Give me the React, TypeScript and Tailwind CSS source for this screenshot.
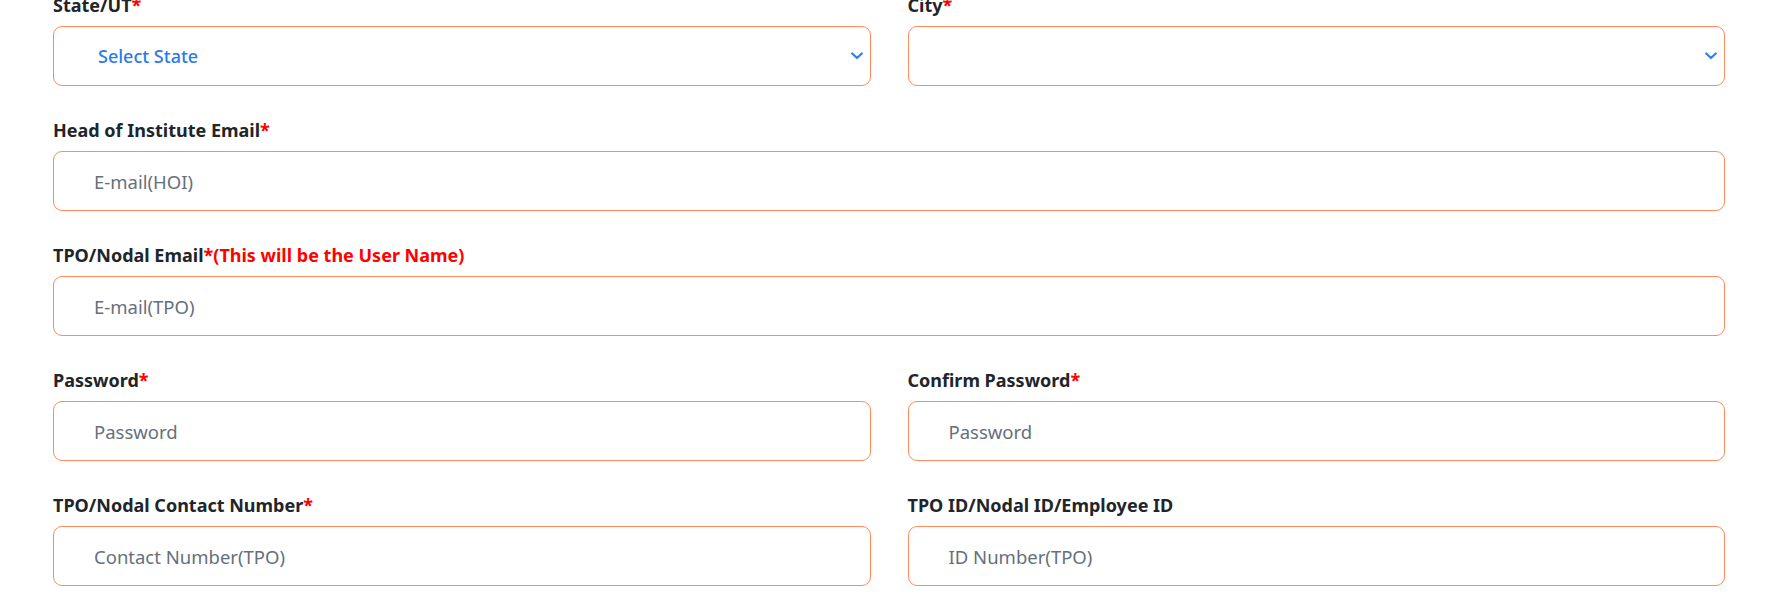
type FieldProps = {
  label: string;
  required?: boolean;
  note?: string;
  placeholder?: string;
  type?: string;
};

const boxClass =
  "h-[60px] w-full rounded-[9px] border border-[#ff8a5b] bg-white pl-[40px] pr-3 text-[18.5px] text-[#212529] placeholder:text-[#66707a] focus:outline-none";

function Label({ label, required, note }: { label: string; required?: boolean; note?: string }) {
  return (
    <label className="mb-[9px] block h-[24px] text-[18px] font-bold leading-[24px] text-[#212529]">
      {label}
      {required && <span className="text-[#ff0000]">*</span>}
      {note && <span className="text-[#ff0000]">{note}</span>}
    </label>
  );
}

function TextField({ label, required, note, placeholder, type = "text" }: FieldProps) {
  return (
    <div className="flex flex-col">
      <Label label={label} required={required} note={note} />
      <input type={type} placeholder={placeholder} className={boxClass} />
    </div>
  );
}

function Chevron() {
  return (
    <svg
      width="12"
      height="8"
      viewBox="0 0 12 8"
      className="pointer-events-none absolute right-[8px] top-1/2 -translate-y-1/2"
      fill="none"
    >
      <polyline points="1.2,1.5 6,6 10.8,1.5" stroke="#2f7ff0" strokeWidth="2.2" strokeLinecap="round" strokeLinejoin="round" />
    </svg>
  );
}

function SelectField({ label, placeholder }: { label: string; placeholder?: string }) {
  return (
    <div className="flex flex-col">
      <Label label={label} required />
      <div className="relative">
        <select
          className="h-[60px] w-full appearance-none rounded-[9px] border border-[#ff8a5b] bg-white pl-[44px] pr-8 text-[18px] font-medium text-[#2a7bea] focus:outline-none"
          defaultValue=""
        >
          <option value="">{placeholder ?? ""}</option>
        </select>
        <Chevron />
      </div>
    </div>
  );
}

export default function App() {
  return (
    <div
      className="min-h-screen overflow-hidden bg-white"
      style={{ fontFamily: '"Noto Sans", "Open Sans", sans-serif' }}
    >
      <div className="-mt-[7px] grid grid-cols-2 gap-x-[37px] gap-y-[32px] pl-[53px] pr-[56px]">
        <SelectField label="State/UT" placeholder="Select State" />
        <SelectField label="City" />
        <div className="col-span-2">
          <TextField label="Head of Institute Email" required placeholder="E-mail(HOI)" type="email" />
        </div>
        <div className="col-span-2">
          <TextField
            label="TPO/Nodal Email"
            required
            note="(This will be the User Name)"
            placeholder="E-mail(TPO)"
            type="email"
          />
        </div>
        <TextField label="Password" required placeholder="Password" type="password" />
        <TextField label="Confirm Password" required placeholder="Password" type="password" />
        <TextField label="TPO/Nodal Contact Number" required placeholder="Contact Number(TPO)" />
        <TextField label="TPO ID/Nodal ID/Employee ID" placeholder="ID Number(TPO)" />
      </div>
    </div>
  );
}
